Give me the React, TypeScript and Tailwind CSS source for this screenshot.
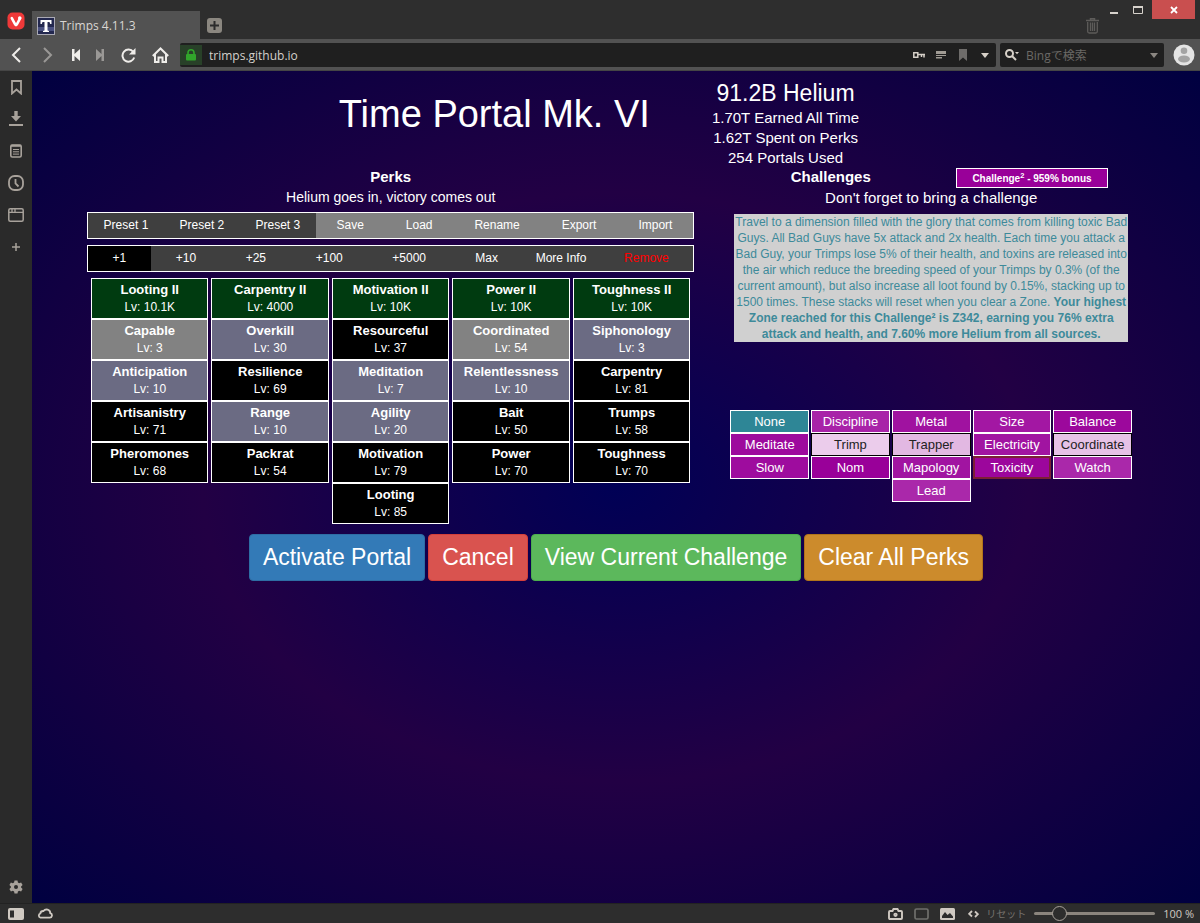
import React from 'react';
import clsx from 'clsx';

type PerkKind = 'tier2' | 'fixed' | 'capped' | 'open';

interface Perk {
  name: string;
  level: string;
  kind: PerkKind;
}

interface Challenge {
  name: string;
  style: string;
}

const perkColors: Record<PerkKind, string> = {
  tier2: 'bg-[#003b10]',
  fixed: 'bg-[#828282]',
  capped: 'bg-[#6b6b83]',
  open: 'bg-black',
};

const perks: Perk[] = [
  { name: 'Looting II', level: '10.1K', kind: 'tier2' },
  { name: 'Carpentry II', level: '4000', kind: 'tier2' },
  { name: 'Motivation II', level: '10K', kind: 'tier2' },
  { name: 'Power II', level: '10K', kind: 'tier2' },
  { name: 'Toughness II', level: '10K', kind: 'tier2' },
  { name: 'Capable', level: '3', kind: 'fixed' },
  { name: 'Overkill', level: '30', kind: 'capped' },
  { name: 'Resourceful', level: '37', kind: 'open' },
  { name: 'Coordinated', level: '54', kind: 'fixed' },
  { name: 'Siphonology', level: '3', kind: 'capped' },
  { name: 'Anticipation', level: '10', kind: 'capped' },
  { name: 'Resilience', level: '69', kind: 'open' },
  { name: 'Meditation', level: '7', kind: 'capped' },
  { name: 'Relentlessness', level: '10', kind: 'capped' },
  { name: 'Carpentry', level: '81', kind: 'open' },
  { name: 'Artisanistry', level: '71', kind: 'open' },
  { name: 'Range', level: '10', kind: 'capped' },
  { name: 'Agility', level: '20', kind: 'capped' },
  { name: 'Bait', level: '50', kind: 'open' },
  { name: 'Trumps', level: '58', kind: 'open' },
  { name: 'Pheromones', level: '68', kind: 'open' },
  { name: 'Packrat', level: '54', kind: 'open' },
  { name: 'Motivation', level: '79', kind: 'open' },
  { name: 'Power', level: '70', kind: 'open' },
  { name: 'Toughness', level: '70', kind: 'open' },
  { name: 'Looting', level: '85', kind: 'open' },
];

const challenges: Challenge[] = [
  { name: 'None', style: 'bg-[#2e8696] border-white' },
  { name: 'Discipline', style: 'bg-[#a823a8] border-white' },
  { name: 'Metal', style: 'bg-[#a012a0] border-white' },
  { name: 'Size', style: 'bg-[#a317a3] border-white' },
  { name: 'Balance', style: 'bg-[#9c089c] border-white' },
  { name: 'Meditate', style: 'bg-[#9d0a9d] border-white' },
  { name: 'Trimp', style: 'bg-[#ebcceb] border-black text-[#222]' },
  { name: 'Trapper', style: 'bg-[#e2b8e2] border-black text-[#222]' },
  { name: 'Electricity', style: 'bg-[#a114a1] border-white' },
  { name: 'Coordinate', style: 'bg-[#e6c1e6] border-black text-[#222]' },
  { name: 'Slow', style: 'bg-[#9e0c9e] border-white' },
  { name: 'Nom', style: 'bg-[#990099] border-white' },
  { name: 'Mapology', style: 'bg-[#a114a1] border-white' },
  { name: 'Toxicity', style: 'bg-[#9c069c] border-2 border-[#7c2034]' },
  { name: 'Watch', style: 'bg-[#aa28aa] border-white' },
  { name: 'Lead', style: 'bg-[#aa28aa] border-white' },
];

const presets = ['Preset 1', 'Preset 2', 'Preset 3', 'Save', 'Load', 'Rename', 'Export', 'Import'];
const amounts = ['+1', '+10', '+25', '+100', '+5000', 'Max', 'More Info', 'Remove'];

const IconButton = ({ label, className, children }: { label: string; className?: string; children: React.ReactNode }) => (
  <button aria-label={label} className={clsx('flex shrink-0 items-center justify-center', className)}>
    {children}
  </button>
);

const TabBar = () => (
  <header className="flex h-[39px] shrink-0 bg-[#2e2e2e]">
    <IconButton label="Menu" className="w-8 pt-[3px]">
      <svg width="18" height="18" viewBox="0 0 18 18">
        <rect x="0.5" y="0.5" width="17" height="17" rx="5" fill="#ef3939" />
        <path d="M4.8 6.2 8.3 12.6Q9 13.6 9.7 12.6L13.2 6.2" fill="none" stroke="#fff" strokeWidth="2.6" strokeLinecap="round" strokeLinejoin="round" />
        <circle cx="12.7" cy="5.9" r="1.7" fill="#fff" />
      </svg>
    </IconButton>
    <button className="mt-[11px] flex w-[168px] items-center gap-[5px] bg-[#525252] pt-px pl-[5px] text-xs text-[#d9d6d3]">
      <svg width="18" height="18" viewBox="0 0 18 18">
        <rect x="0.5" y="0.5" width="17" height="17" fill="#23284f" stroke="#a9a9b4" />
        <path d="M1 10h16v4H1z" fill="#4a5180" />
        <path d="M3.500 3h11v4h-1.300l-.7-2h-2v8.500l1.500.5v1H6v-1l1.500-.5V5h-2l-.7 2H3.500z" fill="#fff" />
      </svg>
      Trimps 4.11.3
    </button>
    <IconButton label="New tab" className="ml-[7px] pt-3">
      <svg width="15" height="15" viewBox="0 0 15 15">
        <rect width="15" height="15" rx="3" fill="#8b8780" />
        <path d="M7.500 3v9M3 7.500h9" stroke="#2b2b2b" strokeWidth="2" />
      </svg>
    </IconButton>
    <IconButton label="Closed tabs" className="mr-[5px] ml-auto pt-3">
      <svg width="13" height="16" viewBox="0 0 13 16" fill="none" stroke="#5e5c5a">
        <path d="M0 2.500h13M4.500 2V.8h4V2" strokeWidth="1.500" />
        <path d="M1.700 4v9.500q0 1.500 1.500 1.500h6.600q1.500 0 1.500-1.500V4M4.500 4.500V13M6.500 4.500V13M8.500 4.500V13" strokeWidth="1.300" />
      </svg>
    </IconButton>
    <div className="flex h-[19px]">
      <IconButton label="Minimize" className="w-5">
        <svg width="8" height="12" viewBox="0 0 8 12"><path d="M0 9h8" stroke="#d6d2cc" strokeWidth="2" /></svg>
      </IconButton>
      <IconButton label="Maximize" className="w-7">
        <svg width="10" height="8" viewBox="0 0 10 8"><path d="M.5 1h9v6.500h-9z" fill="none" stroke="#d6d2cc" /><path d="M0 1h10" stroke="#d6d2cc" strokeWidth="2" /></svg>
      </IconButton>
      <IconButton label="Close" className="mr-[5px] w-[43px] bg-[#c94f4f]">
        <svg width="8" height="8" viewBox="0 0 8 8"><path d="M1 1l6 6M7 1 1 7" stroke="#fff" strokeWidth="1.800" /></svg>
      </IconButton>
    </div>
  </header>
);

const AddressBar = () => (
  <nav className="flex h-8 shrink-0 items-center border-b border-[#454545] bg-[#525252] pt-px text-[#efedea]">
    <IconButton label="Back" className="w-8">
      <svg width="10" height="16" viewBox="0 0 10 16" fill="none" stroke="currentColor" strokeWidth="2"><path d="M9 1 2 8l7 7" /></svg>
    </IconButton>
    <IconButton label="Forward" className="w-8 text-[#9a9896]">
      <svg width="10" height="16" viewBox="0 0 10 16" fill="none" stroke="currentColor" strokeWidth="2"><path d="m1 1 7 7-7 7" /></svg>
    </IconButton>
    <IconButton label="Rewind" className="w-6">
      <svg width="8" height="12" viewBox="0 0 8 12" fill="currentColor"><path d="M0 0h2.500v5L8 0v12L2.500 7v5H0z" /></svg>
    </IconButton>
    <IconButton label="Fast forward" className="w-6 text-[#9a9896]">
      <svg width="8" height="12" viewBox="0 0 8 12" fill="currentColor"><path d="M8 0H5.500v5L0 0v12l5.500-5v5H8z" /></svg>
    </IconButton>
    <IconButton label="Reload" className="w-8">
      <svg width="15" height="15" viewBox="0 0 15 15"><path d="M12.300 4A6 6 0 1 0 13.200 9.500" fill="none" stroke="currentColor" strokeWidth="2" /><path d="M14.500 0v6.500H8z" fill="currentColor" /></svg>
    </IconButton>
    <IconButton label="Home" className="w-9 pr-1">
      <svg width="17" height="16" viewBox="0 0 17 16" fill="none" stroke="currentColor" strokeWidth="2"><path d="M.8 9 8.500 1.500 16.200 9M3 7.500V15h3.500v-4.500h4V15H14V7.500" /></svg>
    </IconButton>
    <div className="flex h-6 flex-1 items-center rounded-xs bg-[#1f1f1f]">
      <span className="flex h-5 w-[22px] items-center justify-center bg-[#284028]">
        <svg width="10" height="12" viewBox="0 0 10 12"><path d="M2 6V3.800a3 3 0 0 1 6 0V6" fill="none" stroke="#31a52b" strokeWidth="1.600" /><rect y="5" width="10" height="6.500" rx="1" fill="#31a52b" /></svg>
      </span>
      <input aria-label="Address" defaultValue="trimps.github.io" className="min-w-0 flex-1 bg-transparent pt-px pl-[7px] text-xs text-[#d4d0cb] outline-none" />
      <div className="flex items-center text-[#d6d0c8]">
        <IconButton label="Passwords" className="w-[22px]">
          <svg width="12" height="6" viewBox="0 0 12 6" fill="none" stroke="currentColor" strokeWidth="1.500"><path d="M.8.8h4v4.400h-4zM5 2.500h7M8.500 3v2M11 3v2.500" /></svg>
        </IconButton>
        <IconButton label="Reader view" className="w-[22px] text-[#a09b94]">
          <svg width="10" height="8" viewBox="0 0 10 8" fill="currentColor"><path d="M0 0h10v3H0zM0 4h10v1H0zM0 6h6v1.500H0z" /></svg>
        </IconButton>
        <IconButton label="Bookmark page" className="w-[22px] text-[#6e6c6a]">
          <svg width="8" height="12" viewBox="0 0 8 12" fill="currentColor"><path d="M0 0h8v12L4 8.500 0 12z" /></svg>
        </IconButton>
        <IconButton label="Address history" className="w-[22px]">
          <svg width="8" height="5" viewBox="0 0 8 5" fill="currentColor"><path d="M0 0h8L4 5z" /></svg>
        </IconButton>
      </div>
    </div>
    <div className="ml-1 flex h-6 w-[164px] items-center rounded-xs bg-[#1f1f1f] pr-1.5 pl-[5px]">
      <svg width="14" height="12" viewBox="0 0 14 12" fill="none" stroke="#d6d0c8"><circle cx="4.500" cy="4.500" r="3.500" strokeWidth="2" /><path d="m7 7 4 4" strokeWidth="2" /><path d="M10 3h4l-2 2.300z" fill="#d6d0c8" stroke="none" /></svg>
      <input aria-label="Search" placeholder="Bingで検索" className="min-w-0 flex-1 bg-transparent pt-px pl-[7px] text-xs outline-none placeholder:text-[#6b6966]" />
      <svg width="8" height="5" viewBox="0 0 8 5" fill="#8b8782"><path d="M0 0h8L4 5z" /></svg>
    </div>
    <IconButton label="Account" className="mr-[5px] ml-[9px]">
      <svg width="22" height="22" viewBox="0 0 22 22"><circle cx="11" cy="11" r="10.500" fill="#e4e4e4" /><circle cx="11" cy="6.800" r="3.300" fill="#a3a3a3" /><ellipse cx="11" cy="15" rx="6" ry="3.500" fill="#a3a3a3" /></svg>
    </IconButton>
  </nav>
);

const SidePanel = () => (
  <aside className="flex w-8 shrink-0 flex-col items-center bg-[#2a2a2a] text-[#a8a29b]">
    <IconButton label="Bookmarks" className="h-8">
      <svg width="11" height="15" viewBox="0 0 11 15" fill="none" stroke="currentColor" strokeWidth="1.800"><path d="M1 1h9v12.500L5.500 9.500 1 13.500z" /></svg>
    </IconButton>
    <IconButton label="Downloads" className="h-8">
      <svg width="14" height="16" viewBox="0 0 14 16" fill="currentColor"><path d="M5.300 0h3.400v5H12L7 10.500 2 5h3.300zM0 13h14v2H0z" /></svg>
    </IconButton>
    <IconButton label="Notes" className="h-8">
      <svg width="12" height="14" viewBox="0 0 12 14" fill="none" stroke="currentColor"><rect x=".8" y="1" width="10.400" height="12" rx="1.500" strokeWidth="1.600" /><path d="M1 1.800h10" strokeWidth="2" /><path d="M3 5.500h6M3 7.800h6M3 10.100h6" /></svg>
    </IconButton>
    <IconButton label="History" className="h-8">
      <svg width="16" height="16" viewBox="0 0 16 16" fill="none" stroke="currentColor" strokeWidth="1.800"><rect x="1" y="1" width="14" height="14" rx="5.500" /><path d="M7.500 4v4.500l3 3" /></svg>
    </IconButton>
    <IconButton label="Window" className="h-8">
      <svg width="16" height="14" viewBox="0 0 16 14" fill="none" stroke="currentColor"><rect x=".8" y=".8" width="14.400" height="12.400" rx="1.500" strokeWidth="1.500" /><path d="M1 4.300h14M4 1v3M7 1v3" strokeWidth="1.300" /></svg>
    </IconButton>
    <IconButton label="Add web panel" className="h-8">
      <svg width="8" height="8" viewBox="0 0 8 8" stroke="currentColor" strokeWidth="1.500"><path d="M4 0v8M0 4h8" /></svg>
    </IconButton>
    <IconButton label="Settings" className="mt-auto h-8">
      <svg width="14" height="14" viewBox="0 0 14 14">
        <path d="M5.500.5h3l.4 2 1.300.7 1.900-.7 1.500 2.600-1.500 1.300v1.200l1.500 1.300-1.500 2.600-1.900-.7-1.300.7-.4 2h-3l-.4-2-1.300-.7-1.900.7L.4 8.900l1.500-1.300V6.400L.4 5.100l1.500-2.600 1.900.7 1.300-.7z" fill="currentColor" />
        <circle cx="7" cy="7" r="2" fill="#2a2a2a" />
      </svg>
    </IconButton>
  </aside>
);

const StatusBar = () => (
  <footer className="flex h-5 shrink-0 items-center border-t border-[#222] bg-[#2d2d2d] pr-1.5 text-[#cfc9c2]">
    <IconButton label="Toggle panel" className="w-8">
      <svg width="16" height="12" viewBox="0 0 16 12"><rect width="16" height="12" rx="2" fill="currentColor" /><path d="M2 2.500h4v7H2z" fill="#2d2d2d" /></svg>
    </IconButton>
    <IconButton label="Sync" className="w-[26px]">
      <svg width="16" height="11" viewBox="0 0 16 11" fill="none" stroke="currentColor" strokeWidth="1.800"><path d="M3.500 9.700h9a2.300 2.300 0 0 0 .8-4.500A3.800 3.800 0 0 0 6.500 3 3 3 0 0 0 3.300 5.500 2.200 2.200 0 0 0 3.500 9.700z" /></svg>
    </IconButton>
    <IconButton label="Capture page" className="ml-auto w-[26px]">
      <svg width="15" height="12" viewBox="0 0 15 12" fill="none" stroke="currentColor" strokeWidth="1.900"><path d="M2 3h2.500L5.500 1h4l1 2H13q1 0 1 1v6q0 1-1 1H2q-1 0-1-1V4q0-1 1-1z" /><circle cx="7.500" cy="6.800" r="1.200" /></svg>
    </IconButton>
    <IconButton label="Tile tabs" className="w-[26px] text-[#6f6f6c]">
      <svg width="15" height="12" viewBox="0 0 15 12" fill="none" stroke="currentColor" strokeWidth="1.700"><rect x="1" y="1" width="13" height="10" rx="1.500" /></svg>
    </IconButton>
    <IconButton label="Show images" className="w-[26px]">
      <svg width="15" height="12" viewBox="0 0 15 12"><rect width="15" height="12" rx="1.500" fill="currentColor" /><path d="M2 10V8l3-4 2.500 3L10 5l3 3.500V10z" fill="#2d2d2d" /></svg>
    </IconButton>
    <IconButton label="Page actions" className="w-[26px]">
      <svg width="11" height="8" viewBox="0 0 11 8" fill="none" stroke="currentColor" strokeWidth="1.800"><path d="M4 1 1.200 3.800 4 6.500M7 1.500l2.800 2.700L7 7" /></svg>
    </IconButton>
    <button className="text-[10px] leading-4 text-[#77736e]">リセット</button>
    <input
      type="range"
      aria-label="Zoom"
      min={20}
      max={500}
      defaultValue={100}
      className="mx-2 h-4 w-[121px] appearance-none bg-transparent [&::-webkit-slider-runnable-track]:h-[3px] [&::-webkit-slider-runnable-track]:rounded-full [&::-webkit-slider-runnable-track]:bg-[#8b857e] [&::-webkit-slider-thumb]:-mt-1.5 [&::-webkit-slider-thumb]:size-[15px] [&::-webkit-slider-thumb]:appearance-none [&::-webkit-slider-thumb]:rounded-full [&::-webkit-slider-thumb]:border [&::-webkit-slider-thumb]:border-[#a8a29b] [&::-webkit-slider-thumb]:bg-[#2d2d2d]"
    />
    <span className="text-[11px] leading-4 whitespace-nowrap">100 %</span>
  </footer>
);

const PerksPanel = () => (
  <section className="text-center">
    <h2 className="text-[15px] leading-[18px] font-bold">Perks</h2>
    <p className="text-sm leading-[22px]">Helium goes in, victory comes out</p>

    <div className="mt-1 grid h-[27px] grid-cols-[76fr_76fr_76fr_69fr_69fr_87fr_77fr_76fr] border border-white text-xs">
      {presets.map((label, i) => (
        <button key={label} className={clsx('pb-0.5', i < 3 ? 'bg-[#3f3f3f]' : 'bg-[#828282]')}>{label}</button>
      ))}
    </div>

    <div className="mt-1.5 grid h-[27px] grid-cols-[63fr_70fr_70fr_77fr_83fr_72fr_77fr_94fr] border border-white text-xs">
      {amounts.map((label, i) => (
        <button key={label} className={clsx('pb-0.5', i === 0 ? 'bg-black' : 'bg-[#3f3f3f]', label === 'Remove' && 'text-[#f00]')}>
          {label}
        </button>
      ))}
    </div>

    <div className="mt-1.5 grid grid-cols-5 gap-x-[3px] px-1">
      {perks.map((perk, i) => (
        <button
          key={perk.name}
          className={clsx('flex h-[41px] flex-col items-center border border-white', perkColors[perk.kind], i === perks.length - 1 && 'col-start-3')}
        >
          <span className="text-[13px] leading-[22px] font-bold">{perk.name}</span>
          <span className="text-xs leading-3">Lv: {perk.level}</span>
        </button>
      ))}
    </div>
  </section>
);

const ChallengesPanel = () => (
  <section className="text-center">
    <div className="flex h-5">
      <h2 className="w-1/2 text-[15px] leading-[18px] font-bold">Challenges</h2>
      <button className="mr-6 ml-auto w-[152px] border border-white bg-[#990099] text-[10px] font-bold">
        Challenge<sup>2</sup> - 959% bonus
      </button>
    </div>
    <p className="text-[15px] leading-5">Don't forget to bring a challenge</p>

    <div className="mx-1 mt-1.5 min-h-32 bg-[#d0d0d0] text-xs leading-4 text-[#3d8a9a]">
      Travel to a dimension filled with the glory that comes from killing toxic Bad Guys. All Bad Guys have 5x attack
      and 2x health. Each time you attack a Bad Guy, your Trimps lose 5% of their health, and toxins are released into
      the air which reduce the breeding speed of your Trimps by 0.3% (of the current amount), but also increase all
      loot found by 0.15%, stacking up to 1500 times. These stacks will reset when you clear a Zone.{' '}
      <b>
        Your highest Zone reached for this Challenge² is Z342, earning you 76% extra attack and health, and 7.60% more
        Helium from all sources.
      </b>
    </div>

    <div className="mt-[68px] grid grid-cols-5 gap-x-0.5 text-[13px]">
      {challenges.map((challenge, i) => (
        <button
          key={challenge.name}
          className={clsx('flex h-[23px] items-center justify-center border', challenge.style, i === challenges.length - 1 && 'col-start-3')}
        >
          {challenge.name}
        </button>
      ))}
    </div>
  </section>
);

const App: React.FC = () => {
  return (
    <div className="flex h-screen flex-col overflow-hidden bg-[#2a2a2a] font-['Open_Sans','Noto_Sans_CJK_JP',sans-serif]">
      <TabBar />
      <AddressBar />

      <div className="flex min-h-0 flex-1">
        <SidePanel />

        <main className="min-w-0 flex-1 overflow-hidden bg-[radial-gradient(ellipse_at_center,#000055_0%,#220044_50%,#000040_100%)] pt-[7px] font-['Liberation_Sans',Arial,sans-serif] text-white">
          <div className="flex justify-center gap-[62px] pr-[34px]">
            <h1 className="text-[38px] leading-[72px]">Time Portal Mk. VI</h1>
            <div className="text-center text-[15px] leading-5">
              <div className="text-[23px] leading-[30px]">91.2B Helium</div>
              <div>1.70T Earned All Time</div>
              <div>1.62T Spent on Perks</div>
              <div>254 Portals Used</div>
            </div>
          </div>

          <div className="grid grid-cols-[608fr_402fr] gap-9 pr-[68px] pl-[55px]">
            <PerksPanel />
            <ChallengesPanel />
          </div>

          <div className="mt-2.5 flex justify-center gap-[3px] text-[23px]">
            <button className="h-[47px] rounded border border-[#2e6da4] bg-[#337ab7] px-[13px]">Activate Portal</button>
            <button className="h-[47px] rounded border border-[#d43f3a] bg-[#d9534f] px-[13px]">Cancel</button>
            <button className="h-[47px] rounded border border-[#4cae4c] bg-[#5cb85c] px-[13px]">View Current Challenge</button>
            <button className="h-[47px] rounded border border-[#b1741a] bg-[#cc8b2c] px-[13px]">Clear All Perks</button>
          </div>
        </main>
      </div>

      <StatusBar />
    </div>
  );
};

export default App;
